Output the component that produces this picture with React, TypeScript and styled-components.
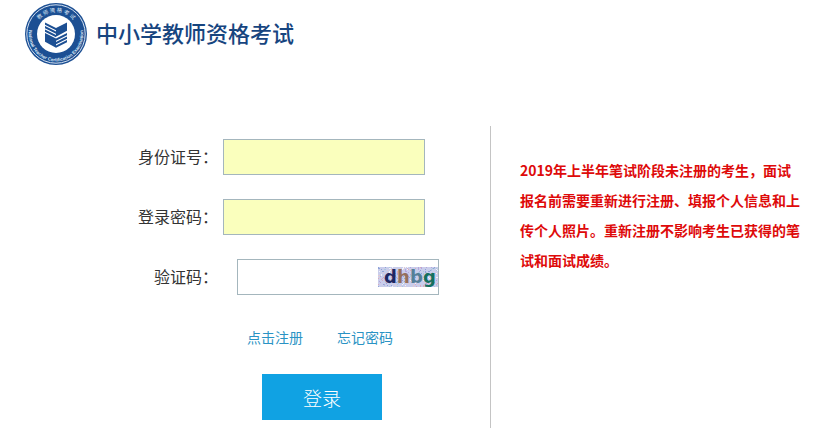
import React from "react";
import styled, { createGlobalStyle } from "styled-components";

const GlobalStyle = createGlobalStyle`
  * { box-sizing: border-box; }
  body {
    margin: 0;
    background: #fff;
    color: #333;
    font-family: "Noto Sans CJK SC", "Noto Sans", sans-serif;
    font-size: 16px;
  }
`;

const Header = styled.header`
  display: flex;
  align-items: center;
  gap: 8px;
  padding: 2px 24px 60px;
`;

const Logo = styled.svg`
  flex: none;
  width: 64px;
  height: 64px;
`;

const Title = styled.h1`
  margin: 0;
  padding-bottom: 4px;
  color: #17457f;
  font-size: 22px;
  font-weight: 500;
  line-height: 32px;
`;

const Main = styled.main`
  display: grid;
  grid-template-columns: minmax(491px, 59%) 1fr;
`;

const LoginForm = styled.form`
  display: flex;
  flex-direction: column;
  gap: 24px;
  padding: 13px 48px 8px 128px;
  border-right: 1px solid #c4c4c4;
`;

const Row = styled.div`
  display: flex;
  align-items: center;
`;

const Label = styled.label<{ $gap: number }>`
  flex: none;
  width: 90px;
  margin-right: ${(p) => p.$gap}px;
  padding-bottom: 2px;
  text-align: right;
  line-height: 34px;
`;

const Field = styled.div<{ $filled?: boolean }>`
  display: flex;
  align-items: center;
  width: 202px;
  height: 36px;
  border: 1px solid #a4b6bd;
  background: ${(p) => (p.$filled ? "#faffbd" : "#fff")};
`;

const Input = styled.input`
  flex: 1;
  min-width: 0;
  height: 100%;
  padding: 0 8px;
  border: 0;
  outline: 0;
  background: transparent;
  font: inherit;
`;

const Captcha = styled.svg`
  flex: none;
  width: 60px;
  height: 20px;
  overflow: visible;
`;

const Links = styled.nav`
  display: flex;
  gap: 34px;
  padding: 7px 0 2px 119px;
`;

const TextLink = styled.a`
  color: #2a93c4;
  font-size: 14px;
  line-height: 22px;
  text-decoration: none;
`;

const Submit = styled.button`
  width: 120px;
  height: 46px;
  margin-left: 134px;
  border: 0;
  background: #10a2e3;
  color: #fff;
  font-family: inherit;
  font-size: 19px;
  font-weight: 300;
  cursor: pointer;
`;

const Notice = styled.p`
  margin: 0;
  padding: 29px 26px 0 29px;
  color: #de0a0a;
  font-size: 14px;
  font-weight: 700;
  line-height: 30px;
`;

const speckColors = ["#8fa3d8", "#d9a9bd", "#f2f2fb", "#a9c9dd", "#b5a5da", "#e3c9cf"];
const specks = Array.from({ length: 300 }, (_, i) => ({
  x: (i * 37 + ((i * i) % 11)) % 60,
  y: (i * 13 + ((i * i) % 7)) % 20,
  color: speckColors[(i * 7 + (i % 5)) % speckColors.length],
}));

const captchaLetters = [
  { char: "d", x: 6, color: "#1d2763" },
  { char: "h", x: 19, color: "#94705c" },
  { char: "b", x: 32, color: "#557f98" },
  { char: "g", x: 45, color: "#14705f" },
];

function CaptchaImage() {
  return (
    <Captcha viewBox="0 0 60 20" role="img" aria-label="验证码图片">
      <rect width="60" height="20" fill="#c9cdeb" />
      {specks.map((s, i) => (
        <rect key={i} x={s.x} y={s.y} width="1" height="1" fill={s.color} />
      ))}
      {captchaLetters.map((l) => (
        <text
          key={l.char}
          x={l.x}
          y="16"
          fill={l.color}
          fontFamily="DejaVu Sans, sans-serif"
          fontSize="18"
          fontWeight="700"
        >
          {l.char}
        </text>
      ))}
    </Captcha>
  );
}

function Emblem() {
  return (
    <Logo viewBox="0 0 64 64" aria-hidden="true">
      <defs>
        <path id="arc-top" d="M10 32a22 22 0 0 1 44 0" />
        <path id="arc-bottom" d="M5.3 27a27.2 27.2 0 1 0 53.4 0" />
      </defs>
      <circle cx="32" cy="32" r="31" fill="#1c4f93" />
      <circle cx="32" cy="32" r="29.2" fill="none" stroke="#d3e0f0" strokeWidth="1" />
      <circle cx="32" cy="32" r="19" fill="#fff" />
      <text
        fill="#dce8f6"
        fontFamily="Noto Sans CJK SC, sans-serif"
        fontSize="5.4"
        textAnchor="middle"
      >
        <textPath href="#arc-top" startOffset="50%">
          教  师  资  格  考  试
        </textPath>
      </text>
      <text
        fill="#dce8f6"
        fontFamily="Liberation Sans, sans-serif"
        fontSize="4.6"
        fontWeight="700"
        textAnchor="middle"
      >
        <textPath href="#arc-bottom" startOffset="50%">
          National Teacher Certification Examination
        </textPath>
      </text>
      <g fill="#1c4f93">
        <path d="M21 20.5l11 5.5v2.2l-11-5.5z" />
        <path d="M21 24l11 5.5v2.2l-11-5.5z" />
        <path d="M21 27.5l11 5.5v2.2l-11-5.5z" />
        <path d="M32 26l11-5.5v8.3L32 34.8z" />
        <path d="M21 31l11 5.5v9.3l-11-6z" />
        <path d="M32 36.5l11-5.5v2.2l-11 5.5z" />
        <path d="M32 40l11-5.5v2.2l-11 5.5z" />
        <path d="M32 43.5L43 38v2.2l-11 5.6z" />
      </g>
    </Logo>
  );
}

export default function App() {
  return (
    <>
      <GlobalStyle />
      <Header>
        <Emblem />
        <Title>中小学教师资格考试</Title>
      </Header>
      <Main>
        <LoginForm onSubmit={(e) => e.preventDefault()}>
          <Row>
            <Label htmlFor="idNumber" $gap={5}>身份证号：</Label>
            <Field $filled>
              <Input id="idNumber" type="text" />
            </Field>
          </Row>
          <Row>
            <Label htmlFor="password" $gap={5}>登录密码：</Label>
            <Field $filled>
              <Input id="password" type="password" />
            </Field>
          </Row>
          <Row>
            <Label htmlFor="captcha" $gap={19}>验证码：</Label>
            <Field>
              <Input id="captcha" type="text" autoComplete="off" />
              <CaptchaImage />
            </Field>
          </Row>
          <Links>
            <TextLink href="#register">点击注册</TextLink>
            <TextLink href="#forgot">忘记密码</TextLink>
          </Links>
          <Submit type="submit">登录</Submit>
        </LoginForm>
        <Notice>
          2019年上半年笔试阶段未注册的考生，面试报名前需要重新进行注册、填报个人信息和上传个人照片。重新注册不影响考生已获得的笔试和面试成绩。
        </Notice>
      </Main>
    </>
  );
}
